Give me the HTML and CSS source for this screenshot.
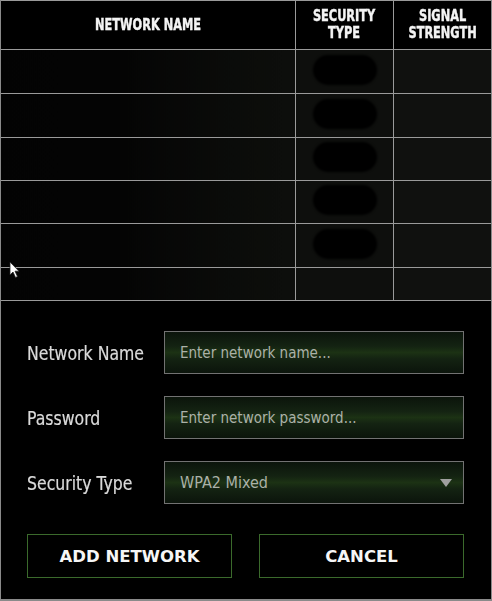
FILE: index.html
```html
<!DOCTYPE html>
<html>
<head>
<meta charset="utf-8">
<link rel="stylesheet" href="styles.css">
</head>
<body>
<div class="app">
  <div class="table-wrap">
    <table class="networks">
      <thead>
        <tr>
          <th class="col-name"><span class="th-text">NETWORK NAME</span></th>
          <th class="col-sec"><span class="th-text">SECURITY<br>TYPE</span></th>
          <th class="col-sig"><span class="th-text">SIGNAL<br>STRENGTH</span></th>
        </tr>
      </thead>
      <tbody>
        <tr class="r44"><td class="c-name"></td><td class="c-sec"><span class="blob"></span></td><td class="c-sig"></td></tr>
        <tr class="r44"><td class="c-name"></td><td class="c-sec"><span class="blob"></span></td><td class="c-sig"></td></tr>
        <tr class="r43"><td class="c-name"></td><td class="c-sec"><span class="blob"></span></td><td class="c-sig"></td></tr>
        <tr class="r43"><td class="c-name"></td><td class="c-sec"><span class="blob"></span></td><td class="c-sig"></td></tr>
        <tr class="r44"><td class="c-name"></td><td class="c-sec"><span class="blob"></span></td><td class="c-sig"></td></tr>
        <tr class="r33"><td class="c-name"></td><td class="c-sec"></td><td class="c-sig"></td></tr>
      </tbody>
    </table>
    <svg class="cursor" width="12" height="18" viewBox="0 0 12 18"><path d="M1 1 L1 14 L4 11 L6.5 16.5 L8.5 15.5 L6 10.2 L10 10.2 Z" fill="#fff" stroke="#222" stroke-width="0.8"/></svg>
  </div>

  <form class="form">
    <div class="row">
      <label class="label"><span class="label-text">Network Name</span></label>
      <div class="field"><span class="placeholder">Enter network name...</span></div>
    </div>
    <div class="row">
      <label class="label"><span class="label-text">Password</span></label>
      <div class="field"><span class="placeholder">Enter network password...</span></div>
    </div>
    <div class="row">
      <label class="label"><span class="label-text">Security Type</span></label>
      <div class="field select"><span class="value">WPA2 Mixed</span><span class="arrow"></span></div>
    </div>
    <div class="buttons">
      <button type="button" class="btn"><span class="btn-text">ADD NETWORK</span></button>
      <button type="button" class="btn"><span class="btn-text">CANCEL</span></button>
    </div>
  </form>
</div>
</body>
</html>
```
FILE: styles.css
```css
html, body {
  margin: 0;
  padding: 0;
  background: #000;
}
.app {
  width: 492px;
  height: 601px;
  box-sizing: border-box;
  border-left: 1px solid #8a8a8a;
  border-right: 1px solid #8a8a8a;
  border-bottom: 2px solid #8a8a8a;
  background: #000;
  position: relative;
  display: flex;
  flex-direction: column;
}
.table-wrap {
  height: 301px;
  overflow: hidden;
  position: relative;
  background: #000;
}
.networks {
  width: 490px;
  border-collapse: collapse;
  table-layout: fixed;
  font-family: "DejaVu Sans Condensed", "DejaVu Sans", sans-serif;
  font-stretch: condensed;
}
.networks th, .networks td {
  border: 1px solid #9a9a9a;
  padding: 0;
}
.networks tr > :first-child { border-left: none; }
.networks tr > :last-child { border-right: 1px solid #9a9a9a; }
.networks th {
  height: 48px;
  background: #000;
  color: #f4f4f4;
  font-weight: bold;
  font-size: 15px;
  line-height: 17px;
  text-align: center;
  vertical-align: middle;
}
.th-text {
  display: inline-block;
  transform: scaleX(0.84);
  white-space: nowrap;
  -webkit-text-stroke: 0.4px #f4f4f4;
}
.col-name { width: 294px; }
.col-sec { width: 97px; }
.col-sig { width: 97px; }
.networks td {
  text-align: center;
  vertical-align: middle;
}
.r44 td { height: 43px; }
.r43 td { height: 42px; }
.r33 td { height: 32px; }
.c-name { background: linear-gradient(90deg, #030303 0%, #040404 40%, #0a0b09 75%, #0d0e0c 100%); }
.c-sec { background: #0e0f0d; }
.c-sig { background: #10110f; }
.blob {
  display: inline-block;
  width: 64px;
  height: 30px;
  border-radius: 15px;
  background: #000;
  filter: blur(1px);
}
.cursor {
  position: absolute;
  left: 8px;
  top: 261px;
}
.form {
  flex: 1;
  padding: 30px 26px 0 26px;
  display: flex;
  flex-direction: column;
  gap: 22px;
  margin: 0;
}
.row {
  display: flex;
  align-items: center;
  height: 43px;
}
.label {
  width: 137px;
  color: #dadada;
  font-family: "DejaVu Sans Condensed", "DejaVu Sans", sans-serif;
  font-stretch: condensed;
  font-size: 19px;
}
.label-text {
  display: inline-block;
  transform: scaleX(0.92);
  transform-origin: left center;
  white-space: nowrap;
  -webkit-text-stroke: 0.2px #dadada;
}
.field {
  width: 300px;
  height: 43px;
  box-sizing: border-box;
  border: 1px solid #727272;
  background: linear-gradient(180deg, #0b140b 0%, #142312 35%, #1c3214 50%, #142312 65%, #0b140b 100%);
  display: flex;
  align-items: center;
  padding: 0 15px;
  font-family: "DejaVu Sans Condensed", "DejaVu Sans", sans-serif;
  font-stretch: condensed;
  font-size: 15px;
  color: #abb1a8;
}
.select { justify-content: space-between; padding-right: 11px; }
.value { color: #abb1a8; font-size: 16px; }
.arrow {
  width: 0;
  height: 0;
  border-left: 6px solid transparent;
  border-right: 6px solid transparent;
  border-top: 8px solid #a0a0a0;
}
.buttons {
  display: flex;
  gap: 27px;
  margin-top: 8px;
}
.btn {
  width: 205px;
  height: 44px;
  background: #000;
  border: 1px solid #3b6a2c;
  color: #f6f6f6;
  font-family: "DejaVu Sans", sans-serif;
  font-weight: bold;
  font-size: 16.5px;
  padding: 0;
  cursor: pointer;
}
.btn-text {
  display: inline-block;
  white-space: nowrap;
}
```
